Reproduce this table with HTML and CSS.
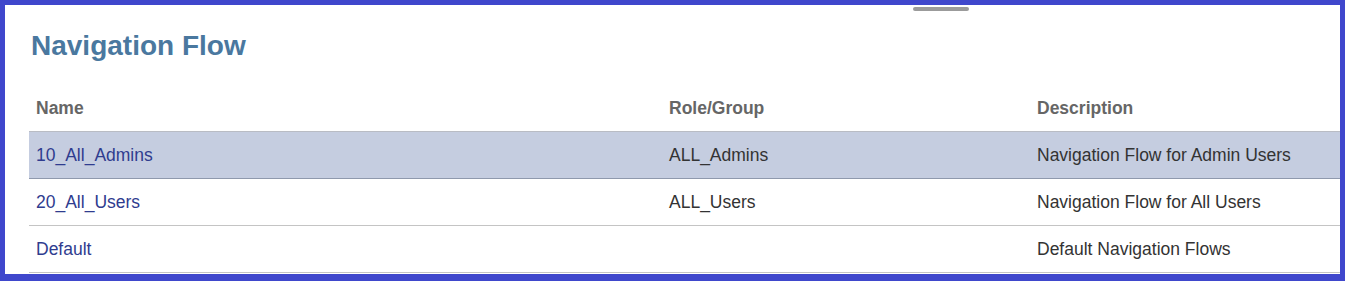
FILE: index.html
```html
<!DOCTYPE html>
<html lang="en">
<head>
<meta charset="utf-8">
<title>Navigation Flow</title>
<link rel="stylesheet" href="styles.css">
</head>
<body>
<div class="frame">
  <div class="grip"></div>
  <h1 class="title">Navigation Flow</h1>
  <table class="flows">
    <colgroup>
      <col class="c-name">
      <col class="c-role">
      <col class="c-desc">
    </colgroup>
    <thead>
      <tr>
        <th>Name</th>
        <th>Role/Group</th>
        <th>Description</th>
      </tr>
    </thead>
    <tbody>
      <tr class="selected">
        <td><a class="link" href="#">10_All_Admins</a></td>
        <td>ALL_Admins</td>
        <td>Navigation Flow for Admin Users</td>
      </tr>
      <tr>
        <td><a class="link" href="#">20_All_Users</a></td>
        <td>ALL_Users</td>
        <td>Navigation Flow for All Users</td>
      </tr>
      <tr>
        <td><a class="link" href="#">Default</a></td>
        <td></td>
        <td>Default Navigation Flows</td>
      </tr>
    </tbody>
  </table>
</div>
</body>
</html>
```

FILE: styles.css
```css
html, body {
  margin: 0;
  padding: 0;
}
body {
  font-family: "Liberation Sans", Arial, sans-serif;
  background: #ffffff;
}
.frame {
  position: relative;
  box-sizing: border-box;
  width: 1345px;
  height: 281px;
  border-style: solid;
  border-color: #3f47cc;
  border-width: 5px 5px 7px 5px;
  padding: 25px 0 0 24px;
  background: #ffffff;
  overflow: hidden;
}
.grip {
  position: absolute;
  top: 2px;
  left: 908px;
  width: 56px;
  height: 4px;
  border-radius: 2px;
  background: #9b9b9b;
}
.title {
  margin: 0 0 0 2px;
  height: 55px;
  line-height: 32px;
  font-size: 28px;
  font-weight: bold;
  color: #4a789f;
}
.flows {
  width: 1311px;
  border-collapse: collapse;
  table-layout: fixed;
  font-size: 17.5px;
}
.c-name { width: 633px; }
.c-role { width: 368px; }
.c-desc { width: 310px; }
.flows th {
  height: 46px;
  padding: 0 0 0 7px;
  text-align: left;
  font-weight: bold;
  color: #666666;
  border-bottom: 1px solid #b9bcc4;
  vertical-align: middle;
}
.flows td {
  height: 46px;
  padding: 0 0 0 7px;
  color: #333333;
  border-bottom: 1px solid #c4c4c4;
  vertical-align: middle;
  white-space: nowrap;
}
.flows tr.selected td {
  background: #c5cde0;
  border-bottom-color: #8f99ad;
}
.link {
  color: #2f3c8f;
  text-decoration: none;
}
```
